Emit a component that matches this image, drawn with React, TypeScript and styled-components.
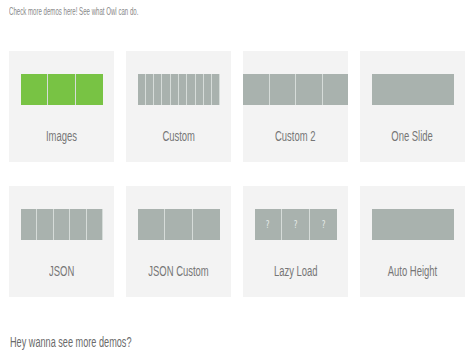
import * as React from "react";
import styled, { createGlobalStyle } from "styled-components";

const GlobalStyle = createGlobalStyle`
  html, body {
    margin: 0;
    padding: 0;
    background: #ffffff;
  }
  body {
    font-family: "Liberation Sans", Arial, sans-serif;
  }
`;

interface Demo {
  title: string;
  slides: number;
  color?: string;
  wide?: boolean;
  lazy?: boolean;
}

const demos: Demo[] = [
  { title: "Images", slides: 3, color: "#78c344" },
  { title: "Custom", slides: 10 },
  { title: "Custom 2", slides: 4, wide: true },
  { title: "One Slide", slides: 1 },
  { title: "JSON", slides: 5 },
  { title: "JSON Custom", slides: 3 },
  { title: "Lazy Load", slides: 3, lazy: true },
  { title: "Auto Height", slides: 1 },
];

const Page = styled.div`
  padding: 5px 9px 0 9px;
  width: 474px;
  height: 355px;
  box-sizing: border-box;
  overflow: hidden;
`;

// the screenshot's type is a condensed grotesque; squeeze Arial metrics to match
const Condensed = styled.span<{ $x: number; $origin?: string }>`
  display: inline-block;
  white-space: nowrap;
  transform: scaleX(${p => p.$x});
  transform-origin: ${p => p.$origin ?? "left"} center;
`;

const Intro = styled.p`
  margin: 0;
  font-size: 11.5px;
  line-height: 13px;
  color: #888888;
`;

const Grid = styled.div`
  display: grid;
  grid-template-columns: repeat(4, 105px);
  column-gap: 12px;
  row-gap: 24px;
  margin-top: 33px;
`;

const Card = styled.div`
  background: #f3f3f3;
  height: 111px;
  display: flex;
  flex-direction: column;
  align-items: center;
  padding-top: 23px;
  box-sizing: border-box;
`;

const Strip = styled.div<{ $wide?: boolean }>`
  display: flex;
  width: ${p => (p.$wide ? "105px" : "82px")};
  height: 31px;
  gap: 1px;
  background: #d6dcd9;
`;

const Slide = styled.div<{ $color?: string }>`
  flex: 1;
  background: ${p => p.$color ?? "#a9b2ae"};
  display: flex;
  align-items: center;
  justify-content: center;
`;

const Spinner = styled.span`
  font-size: 10px;
  color: #e6ebe8;
  font-family: "DejaVu Sans", sans-serif;
  transform: scaleX(0.7);
`;

const Label = styled.div`
  margin-top: 22px;
  font-size: 15.5px;
  line-height: 18px;
  color: #767676;
`;

const Footer = styled.p`
  margin: 36px 0 0 1px;
  font-size: 15.5px;
  line-height: 18px;
  color: #6a6a6a;
`;

export default function App() {
  return (
    <Page>
      <GlobalStyle />
      <Intro>
        <Condensed $x={0.53}>Check more demos here! See what Owl can do.</Condensed>
      </Intro>
      <Grid>
        {demos.map(d => (
          <Card key={d.title}>
            <Strip $wide={d.wide}>
              {Array.from({ length: d.slides }).map((_, i) => (
                <Slide key={i} $color={d.color}>
                  {d.lazy && <Spinner>?</Spinner>}
                </Slide>
              ))}
            </Strip>
            <Label>
              <Condensed $x={0.61} $origin="center">
                {d.title}
              </Condensed>
            </Label>
          </Card>
        ))}
      </Grid>
      <Footer>
        <Condensed $x={0.59}>Hey wanna see more demos?</Condensed>
      </Footer>
    </Page>
  );
}
